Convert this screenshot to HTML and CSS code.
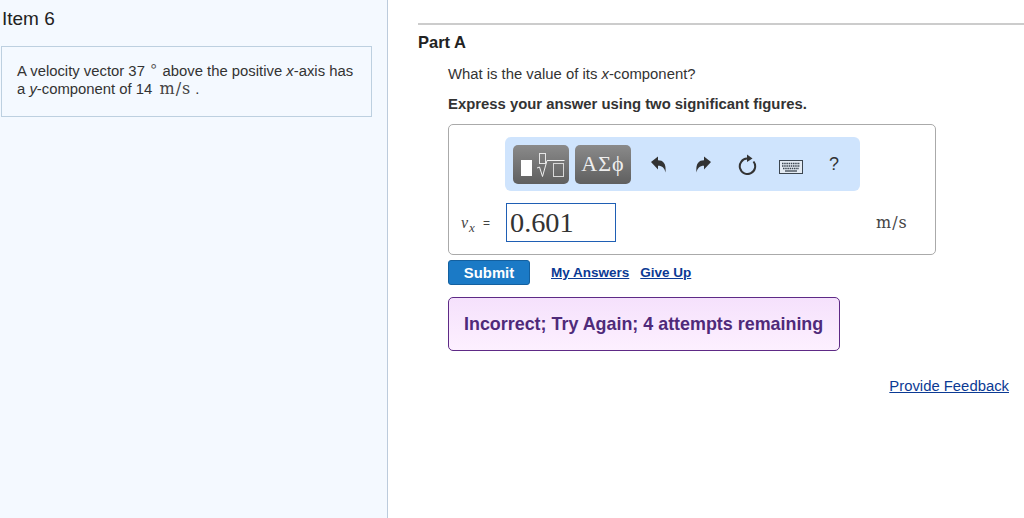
FILE: index.html
```html
<!DOCTYPE html>
<html lang="en">
<head>
<meta charset="utf-8">
<title>Item 6</title>
<link rel="stylesheet" href="styles.css">
</head>
<body>
<div class="page">
  <aside class="left">
    <h1 class="item-title">Item 6</h1>
    <div class="problem">
      A velocity vector 37 <span class="deg">∘</span> above the positive <i>x</i>-axis has<br>
      a <i>y</i>-component of 14 <span class="unit">m/s</span> .
    </div>
  </aside>
  <main class="right">
    <hr class="rule">
    <h2 class="part">Part A</h2>
    <div class="content">
      <p class="question">What is the value of its <i>x</i>-component?</p>
      <p class="instruction">Express your answer using two significant figures.</p>
      <div class="answer">
        <div class="toolbar">
          <button class="tmpl">
            <svg width="56" height="39" viewBox="0 0 56 39">
              <rect x="8" y="15" width="11" height="16" fill="#fff"/>
              <path d="M24 23l2.500-1 3 9.500 4.500-16h17.500" fill="none" stroke="#f0f0f0" stroke-width="1"/>
              <rect x="26.500" y="8.500" width="6" height="10" fill="none" stroke="#e6e6e6" stroke-width="1"/>
              <rect x="40.500" y="18.500" width="10" height="13" fill="none" stroke="#d8d8d8" stroke-width="1"/>
            </svg>
          </button>
          <button class="tmpl greek">ΑΣϕ</button>
          <div class="actions">
            <svg class="ic" width="18" height="20" viewBox="0 0 18 20"><path d="M1 7L8 1.500v3.700c5 0 8.500 3 7.500 12.300-1-4.500-3-6.800-7.500-6.800v3.800z" fill="#333"/></svg>
            <svg class="ic" width="18" height="20" viewBox="0 0 18 20"><path d="M17 7L10 1.500v3.700c-5 0-8.500 3-7.500 12.300 1-4.500 3-6.800 7.500-6.800v3.800z" fill="#333"/></svg>
            <svg class="ic" width="20" height="22" viewBox="0 0 20 22"><path d="M15.500 8.500a7.700 7.700 0 1 1-6.500-2.900" fill="none" stroke="#333" stroke-width="2"/><path d="M9 1.500l5.500 4-5.500 3.500z" fill="#333"/></svg>
            <svg class="ic" width="24" height="14" viewBox="0 0 24 14"><rect x=".5" y=".5" width="23" height="13" fill="#e4ebf3" stroke="#3c4650"/><path d="M3 3.500h18M3 6h18M4 8.500h16" stroke="#3c4650" stroke-width="1.300" stroke-dasharray="1.500 .7"/><path d="M6 11h12" stroke="#3c4650" stroke-width="1.300"/></svg>
            <span class="help">?</span>
          </div>
        </div>
        <div class="entry">
          <span class="var"><i>v<sub>x</sub></i><span class="eq">=</span></span>
          <input class="field" type="text" value="0.601" aria-label="answer">
          <span class="units">m/s</span>
        </div>
      </div>
      <div class="submit-row">
        <button class="submit">Submit</button>
        <a class="link first" href="#">My Answers</a>
        <a class="link" href="#">Give Up</a>
      </div>
      <div class="feedback">Incorrect; Try Again; 4 attempts remaining</div>
    </div>
    <div class="provide"><a href="#">Provide Feedback</a></div>
  </main>
</div>
</body>
</html>
```
FILE: styles.css
```css
* { box-sizing: border-box; }
html, body { margin: 0; height: 100%; overflow: hidden; }
body { font-family: "Liberation Sans", Arial, sans-serif; color: #333; background: #fff; }
.page { display: flex; height: 518px; }
.left {
  width: 388px;
  flex: none;
  background: #f4f9ff;
  border-right: 1px solid #bccbdc;
  padding: 9px 15px 0 1px;
}
.item-title { margin: 0 0 0 1px; font-size: 19px; line-height: 20px; font-weight: 400; color: #222; }
.problem {
  margin-top: 17px;
  height: 71px;
  border: 1px solid #bdd0e0;
  padding: 15px 15px 0;
  font-size: 14.850px;
  line-height: 18px;
  color: #333;
}
.deg { font-size: 15px; line-height: 0; position: relative; top: -5px; font-family: "DejaVu Sans", sans-serif; font-weight: 400; color: #555; margin: 0; }
.unit { font-family: "DejaVu Serif", serif; font-size: 16px; line-height: 0; letter-spacing: 1px; color: #444; margin-left: 3px; }
.right { flex: 1; padding: 23px 0 0 30px; min-width: 0; }
.rule { margin: 0; border: 0; height: 2px; background: #ccc; }
.part { margin: 8px 0 0; font-size: 16.500px; line-height: 18px; font-weight: 700; color: #222; }
.content { padding-left: 30px; }
.question { margin: 14px 0 0; font-size: 14.850px; line-height: 18px; }
.instruction { margin: 12px 0 0; font-size: 14.850px; line-height: 18px; font-weight: 700; }
.answer {
  margin-top: 11px;
  width: 488px;
  height: 131px;
  border: 1px solid #aaa;
  border-radius: 5px;
  padding: 12px 0 0 56px;
}
.toolbar {
  width: 355px;
  height: 54px;
  background: #cfe4fd;
  border-radius: 6px;
  display: flex;
  align-items: center;
  padding-left: 8px;
  gap: 6px;
}
.tmpl {
  width: 56px;
  height: 39px;
  padding: 0;
  border: 0;
  border-radius: 5px;
  background: linear-gradient(#8a8a8a, #5f5f5f);
  display: block;
}
.tmpl svg { display: block; }
.greek {
  font-family: "Liberation Serif", serif;
  font-size: 22px;
  color: #eee;
  letter-spacing: 1px;
}
.actions {
  display: flex;
  align-items: center;
  flex: 1;
  padding-left: 13px;
}
.ic { display: block; flex: none; }
.ic:nth-child(1), .ic:nth-child(2) { margin-top: 2px; margin-right: 26px; }
.ic:nth-child(3) { margin-right: 21px; }
.ic:nth-child(4) { margin-top: 5px; margin-right: 26px; }
.help { font-size: 18px; color: #333; }
.entry { display: flex; align-items: center; margin-top: 12px; height: 39px; }
.var {
  margin-left: -44px;
  width: 45px;
  font-family: "Liberation Serif", serif;
  font-size: 16px;
  color: #444;
  white-space: nowrap;
}
.var sub { font-size: 13px; line-height: 0; margin-left: 1px; letter-spacing: 1px; }
.eq { font-family: "Liberation Sans", sans-serif; font-size: 12px; margin-left: 7px; position: relative; top: -1px; }
.field {
  width: 110px;
  height: 39px;
  border: 1px solid #1f5fb4;
  padding: 0 3px;
  font-family: "Liberation Serif", serif;
  font-size: 28.300px;
  color: #333;
  outline: 0;
  border-radius: 0;
}
.units {
  margin-left: 260px;
  font-family: "DejaVu Serif", serif;
  font-size: 16px;
  letter-spacing: 1px;
  color: #444;
}
.submit-row { display: flex; align-items: center; margin-top: 5px; height: 25px; }
.submit {
  width: 82px;
  height: 25px;
  padding: 0;
  border: 1px solid #14609f;
  border-radius: 3px;
  background: #1b7ac6;
  color: #fff;
  font: 700 14.850px "Liberation Sans", sans-serif;
}
.link { font-size: 13.500px; font-weight: 700; color: #0b3a94; margin-left: 11px; }
.link.first { margin-left: 21px; }
.feedback {
  margin-top: 12px;
  width: 392px;
  height: 54px;
  border: 1px solid #5e2a86;
  border-radius: 5px;
  background: linear-gradient(#f5e1fc, #fdf0ff);
  color: #4f2a7a;
  font-size: 17.900px;
  font-weight: 700;
  line-height: 52px;
  padding-left: 15px;
  white-space: nowrap;
}
.provide { margin-top: 26px; padding-right: 15px; text-align: right; font-size: 14.850px; line-height: 18px; }
.provide a { color: #0b3a94; }
```
